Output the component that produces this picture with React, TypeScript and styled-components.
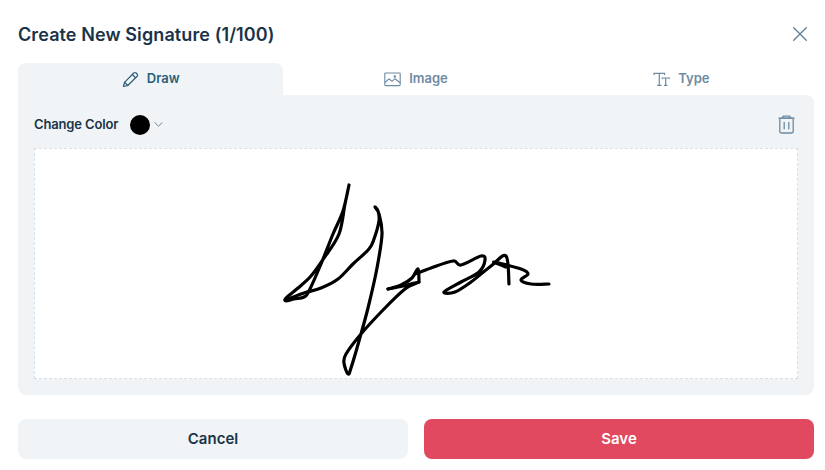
import styled, { createGlobalStyle } from "styled-components";

const GlobalStyle = createGlobalStyle`
    html, body {
        margin: 0;
        padding: 0;
        background: #ffffff;
        font-family: "Inter", "Liberation Sans", sans-serif;
    }
`;

// points read off the reference, in page coordinates (canvas starts at 34,148)
const rawStrokes: number[][][] = [
    [[348,184],[344,203],[338,233],[323,257],[310,275],[297,287],[285,297],[285,300],[293,298],[303,296],[308,290],[320,263],[332,233],[342,210],[348,184]],
    [[287,298],[303,292],[320,287],[337,278],[352,263],[368,248],[373,238],[378,220],[377,210],[374,206],[378,213],[381,233],[376,267],[367,307],[358,340],[350,367],[347,373],[343,362],[345,353],[360,333],[383,308],[404,288],[418,281],[402,285],[387,288]],
    [[387,288],[400,284],[411,277],[417,268],[418,281]],
    [[414,273],[430,267],[452,260],[460,264],[480,255],[484,259],[478,271],[460,281],[443,291],[454,291],[470,281],[490,265],[505,255],[508,283]],
    [[505,266],[493,261],[520,268],[527,273],[520,279],[530,283],[548,283]],
];

const toPath = (pts: number[][]) => {
    const p = pts.map(([x, y]) => [x - 34, y - 148]);
    let d = `M${p[0][0]} ${p[0][1]}`;
    for (let i = 0; i < p.length - 1; i++) {
        const a = p[Math.max(i - 1, 0)];
        const b = p[i];
        const c = p[i + 1];
        const e = p[Math.min(i + 2, p.length - 1)];
        const c1x = b[0] + (c[0] - a[0]) / 6;
        const c1y = b[1] + (c[1] - a[1]) / 6;
        const c2x = c[0] - (e[0] - b[0]) / 6;
        const c2y = c[1] - (e[1] - b[1]) / 6;
        d += ` C${c1x.toFixed(1)} ${c1y.toFixed(1)} ${c2x.toFixed(1)} ${c2y.toFixed(1)} ${c[0]} ${c[1]}`;
    }
    return d;
};

const PencilIcon = () => (
    <svg width="17" height="17" viewBox="0 0 17 17" fill="none" stroke="currentColor" strokeWidth="1.2" strokeLinejoin="round" strokeLinecap="round">
        <path d="M1.5 15.5l1-4.2L11.8 2a1.6 1.6 0 0 1 2.3 0l1 1a1.6 1.6 0 0 1 0 2.3L5.8 14.5z" />
        <path d="M10.3 3.5l3.4 3.4M2.5 11.3l3.3 3.2" />
    </svg>
);

const ImageIcon = () => (
    <svg width="17" height="15" viewBox="0 0 17 15" fill="none" stroke="currentColor" strokeWidth="1.1" strokeLinejoin="round">
        <rect x="0.8" y="1" width="15.4" height="12.6" rx="0.8" />
        <path d="M1 10.5l4-3.6 3 2.4 3-2.6 5 4" />
        <circle cx="10.8" cy="4.4" r="0.7" />
    </svg>
);

const TypeIcon = () => (
    <svg width="17" height="15" viewBox="0 0 17 15" fill="none" stroke="currentColor" strokeWidth="1.2" strokeLinecap="round">
        <path d="M1 2.6V1.4h10.6v1.2M6.3 1.4v12M4.6 13.4h3.4" />
        <path d="M9.2 6.6V6h7v.6M12.7 6v7.4M11.5 13.4h2.4" />
    </svg>
);

const TrashIcon = () => (
    <svg width="17" height="19" viewBox="0 0 17 19" fill="none" stroke="currentColor" strokeWidth="1.3" strokeLinecap="round" strokeLinejoin="round">
        <path d="M0.9 3.2h15.2" />
        <path d="M5 3V1.2h7V3" />
        <rect x="1.8" y="3.2" width="13.4" height="14.8" rx="1.4" />
        <path d="M6.2 7.5v6.3M10.8 7.5v6.3" />
    </svg>
);

const CloseIcon = () => (
    <svg width="14" height="14" viewBox="0 0 14 14" fill="none" stroke="currentColor" strokeWidth="1.3" strokeLinecap="round">
        <path d="M0.7 0.7l12.6 12.6M13.3 0.7L0.7 13.3" />
    </svg>
);

const ChevronIcon = () => (
    <svg width="9" height="5" viewBox="0 0 9 5" fill="none" stroke="currentColor" strokeWidth="1" strokeLinecap="round" strokeLinejoin="round">
        <path d="M0.8 0.6l3.7 3.6 3.7-3.6" />
    </svg>
);

export default function App() {
    return (
        <>
            <GlobalStyle />
            <Modal>
                <Header>
                    <Title>Create New Signature (1/100)</Title>
                    <CloseButton><CloseIcon /></CloseButton>
                </Header>
                <Tabs>
                    <Tab $active><PencilIcon /><TabLabel>Draw</TabLabel></Tab>
                    <Tab><ImageIcon /><TabLabel>Image</TabLabel></Tab>
                    <Tab><TypeIcon /><TabLabel>Type</TabLabel></Tab>
                </Tabs>
                <Panel>
                    <Toolbar>
                        <ColorPicker>
                            <ColorLabel>Change Color</ColorLabel>
                            <Swatch />
                            <Chevron><ChevronIcon /></Chevron>
                        </ColorPicker>
                        <TrashButton><TrashIcon /></TrashButton>
                    </Toolbar>
                    <Canvas>
                        <Signature viewBox="0 0 762 229" fill="none" stroke="#000" strokeWidth="3.2" strokeLinecap="round" strokeLinejoin="round">
                            {rawStrokes.map((s, i) => <path key={i} d={toPath(s)} />)}
                        </Signature>
                    </Canvas>
                </Panel>
                <Footer>
                    <ActionButton>Cancel</ActionButton>
                    <ActionButton $primary>Save</ActionButton>
                </Footer>
            </Modal>
        </>
    );
}

const Modal = styled.div`
    width: 825px;
    height: 470px;
    box-sizing: border-box;
    padding: 0 11px 0 18px;
    display: flex;
    flex-direction: column;
    overflow: hidden;
`;

const Header = styled.div`
    height: 63px;
    flex: none;
    display: flex;
    justify-content: space-between;
    align-items: center;
    padding-top: 5px;
    box-sizing: border-box;
`;

const Title = styled.h1`
    margin: 0;
    font-size: 18px;
    font-weight: 600;
    letter-spacing: 0.1px;
    color: #1b3348;
`;

const CloseButton = styled.div`
    display: flex;
    color: #5f7c93;
    margin-right: 7px;
`;

const Tabs = styled.div`
    display: grid;
    grid-template-columns: repeat(3, 1fr);
    height: 32px;
    flex: none;
`;

const Tab = styled.div<{ $active?: boolean }>`
    display: flex;
    align-items: center;
    justify-content: center;
    gap: 8px;
    font-size: 13px;
    font-weight: 600;
    color: ${p => (p.$active ? "#2b5f78" : "#6f8aa1")};
    background: ${p => (p.$active ? "#f0f4f7" : "transparent")};
    border-radius: 8px 8px 0 0;
`;

const TabLabel = styled.span`
    margin-top: -2px;
`;

const Panel = styled.div`
    height: 300px;
    flex: none;
    background: #f0f4f7;
    border-radius: 0 8px 8px 8px;
    padding: 0 16px 16px;
    box-sizing: border-box;
    display: flex;
    flex-direction: column;
`;

const Toolbar = styled.div`
    height: 53px;
    flex: none;
    display: flex;
    justify-content: space-between;
    align-items: center;
    padding-top: 6px;
    box-sizing: border-box;
`;

const ColorPicker = styled.div`
    display: flex;
    align-items: center;
`;

const ColorLabel = styled.span`
    width: 96px;
    margin-top: -2px;
    font-size: 13px;
    font-weight: 600;
    letter-spacing: -0.15px;
    color: #1b3348;
`;

const Swatch = styled.span`
    width: 20px;
    height: 20px;
    border-radius: 50%;
    background: #000;
`;

const Chevron = styled.span`
    display: flex;
    color: #6f8aa1;
    margin-left: 4px;
`;

const TrashButton = styled.div`
    display: flex;
    color: #6f8aa1;
    margin-right: 3px;
`;

const Canvas = styled.div`
    flex: 1;
    background: #ffffff;
    border: 1px dashed #d5e0e8;
    min-height: 0;
`;

const Signature = styled.svg`
    display: block;
    width: 100%;
    height: 100%;
`;

const Footer = styled.div`
    display: grid;
    grid-template-columns: 1fr 1fr;
    gap: 16px;
    margin-top: 24px;
`;

const ActionButton = styled.div<{ $primary?: boolean }>`
    height: 40px;
    box-sizing: border-box;
    padding-bottom: 2px;
    display: flex;
    align-items: center;
    justify-content: center;
    border-radius: 8px;
    font-size: 15px;
    font-weight: 600;
    background: ${p => (p.$primary ? "#e0495f" : "#f0f4f7")};
    color: ${p => (p.$primary ? "#ffffff" : "#1b3348")};
`;
